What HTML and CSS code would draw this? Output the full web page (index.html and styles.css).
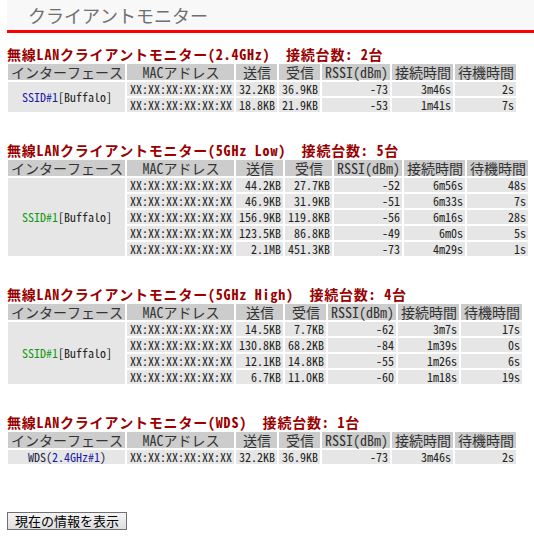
FILE: index.html
```html
<!DOCTYPE html>
<html lang="ja">
<head>
<meta charset="utf-8">
<title>クライアントモニター</title>
<link rel="stylesheet" href="styles.css">
</head>
<body>
<div class="top"><h1 class="title">クライアントモニター</h1></div>
<div class="content">
  <section class="mon">
    <h2 class="mon-head">無線LANクライアントモニター(2.4GHz)&nbsp; 接続台数: 2台</h2>
    <table class="grid">
      <thead><tr><th>インターフェース</th><th>MACアドレス</th><th>送信</th><th>受信</th><th>RSSI(dBm)</th><th>接続時間</th><th>待機時間</th></tr></thead>
      <tbody>
        <tr><td rowspan="2" class="if"><span class="ssid-a">SSID#1</span>[Buffalo]</td><td class="mac">XX:XX:XX:XX:XX:XX</td><td class="num">32.2KB</td><td class="num">36.9KB</td><td class="num">-73</td><td class="num">3m46s</td><td class="num">2s</td></tr>
        <tr><td class="mac">XX:XX:XX:XX:XX:XX</td><td class="num">18.8KB</td><td class="num">21.9KB</td><td class="num">-53</td><td class="num">1m41s</td><td class="num">7s</td></tr>
      </tbody>
    </table>
  </section>
  <section class="mon">
    <h2 class="mon-head">無線LANクライアントモニター(5GHz Low)&nbsp; 接続台数: 5台</h2>
    <table class="grid">
      <thead><tr><th>インターフェース</th><th>MACアドレス</th><th>送信</th><th>受信</th><th>RSSI(dBm)</th><th>接続時間</th><th>待機時間</th></tr></thead>
      <tbody>
        <tr><td rowspan="5" class="if"><span class="ssid-g">SSID#1</span>[Buffalo]</td><td class="mac">XX:XX:XX:XX:XX:XX</td><td class="num">44.2KB</td><td class="num">27.7KB</td><td class="num">-52</td><td class="num">6m56s</td><td class="num">48s</td></tr>
        <tr><td class="mac">XX:XX:XX:XX:XX:XX</td><td class="num">46.9KB</td><td class="num">31.9KB</td><td class="num">-51</td><td class="num">6m33s</td><td class="num">7s</td></tr>
        <tr><td class="mac">XX:XX:XX:XX:XX:XX</td><td class="num">156.9KB</td><td class="num">119.8KB</td><td class="num">-56</td><td class="num">6m16s</td><td class="num">28s</td></tr>
        <tr><td class="mac">XX:XX:XX:XX:XX:XX</td><td class="num">123.5KB</td><td class="num">86.8KB</td><td class="num">-49</td><td class="num">6m0s</td><td class="num">5s</td></tr>
        <tr><td class="mac">XX:XX:XX:XX:XX:XX</td><td class="num">2.1MB</td><td class="num">451.3KB</td><td class="num">-73</td><td class="num">4m29s</td><td class="num">1s</td></tr>
      </tbody>
    </table>
  </section>
  <section class="mon">
    <h2 class="mon-head">無線LANクライアントモニター(5GHz High)&nbsp; 接続台数: 4台</h2>
    <table class="grid">
      <thead><tr><th>インターフェース</th><th>MACアドレス</th><th>送信</th><th>受信</th><th>RSSI(dBm)</th><th>接続時間</th><th>待機時間</th></tr></thead>
      <tbody>
        <tr><td rowspan="4" class="if"><span class="ssid-g">SSID#1</span>[Buffalo]</td><td class="mac">XX:XX:XX:XX:XX:XX</td><td class="num">14.5KB</td><td class="num">7.7KB</td><td class="num">-62</td><td class="num">3m7s</td><td class="num">17s</td></tr>
        <tr><td class="mac">XX:XX:XX:XX:XX:XX</td><td class="num">130.8KB</td><td class="num">68.2KB</td><td class="num">-84</td><td class="num">1m39s</td><td class="num">0s</td></tr>
        <tr><td class="mac">XX:XX:XX:XX:XX:XX</td><td class="num">12.1KB</td><td class="num">14.8KB</td><td class="num">-55</td><td class="num">1m26s</td><td class="num">6s</td></tr>
        <tr><td class="mac">XX:XX:XX:XX:XX:XX</td><td class="num">6.7KB</td><td class="num">11.0KB</td><td class="num">-60</td><td class="num">1m18s</td><td class="num">19s</td></tr>
      </tbody>
    </table>
  </section>
  <section class="mon">
    <h2 class="mon-head">無線LANクライアントモニター(WDS)&nbsp; 接続台数: 1台</h2>
    <table class="grid">
      <thead><tr><th>インターフェース</th><th>MACアドレス</th><th>送信</th><th>受信</th><th>RSSI(dBm)</th><th>接続時間</th><th>待機時間</th></tr></thead>
      <tbody>
        <tr><td class="if"><span class="wds">WDS(</span><span class="ssid-a">2.4GHz#1</span><span class="wds">)</span></td><td class="mac">XX:XX:XX:XX:XX:XX</td><td class="num">32.2KB</td><td class="num">36.9KB</td><td class="num">-73</td><td class="num">3m46s</td><td class="num">2s</td></tr>
      </tbody>
    </table>
  </section>
  <button class="refresh" type="button">現在の情報を表示</button>
</div>
</body>
</html>
```

FILE: styles.css
```css
body {
  margin: 0;
  background: #fff;
  color: #222;
  font-family: "Noto Sans Mono CJK JP", "Noto Sans CJK JP", monospace;
}

.top {
  margin-left: 7px;
  height: 30px;
  background: #f8f8f8;
  border-bottom: 3px solid #ff0000;
}

.title {
  margin: 0;
  padding-left: 21px;
  font-size: 18px;
  font-weight: normal;
  line-height: 31px;
  color: #6f6f6f;
}

.content {
  padding-left: 7px;
}

.mon {
  margin-top: 28px;
}

.mon:first-child {
  margin-top: 13px;
}

.mon-head {
  margin: 0;
  font-size: 14px;
  line-height: 16px;
  font-weight: bold;
  letter-spacing: 0.8px;
  color: #990000;
  white-space: nowrap;
}

.grid {
  border-collapse: separate;
  border-spacing: 2px;
  margin-left: -1px;
  font-size: 12px;
}

.grid th {
  background: #cccccc;
  color: #333;
  font-weight: normal;
  font-size: 14px;
  line-height: 16px;
  padding: 0 2px 0 3px;
  white-space: nowrap;
}

.grid td {
  background: #e6e6e6;
  line-height: 14px;
  padding: 0 2px 0 3px;
  white-space: nowrap;
}

.num {
  text-align: right;
}

.mac,
.if {
  text-align: center;
}

.ssid-a {
  color: #1a1aa6;
}

.ssid-g {
  color: #119911;
}

.wds {
  color: #222244;
}

.refresh {
  margin-top: 46px;
  height: 18px;
  padding: 0 7px;
  font-family: "Noto Sans CJK JP", sans-serif;
  font-size: 13px;
  line-height: 16px;
  color: #000;
  border: 1px solid #707070;
  border-radius: 0;
  background: linear-gradient(#f4f4f4, #dedede);
}
```
